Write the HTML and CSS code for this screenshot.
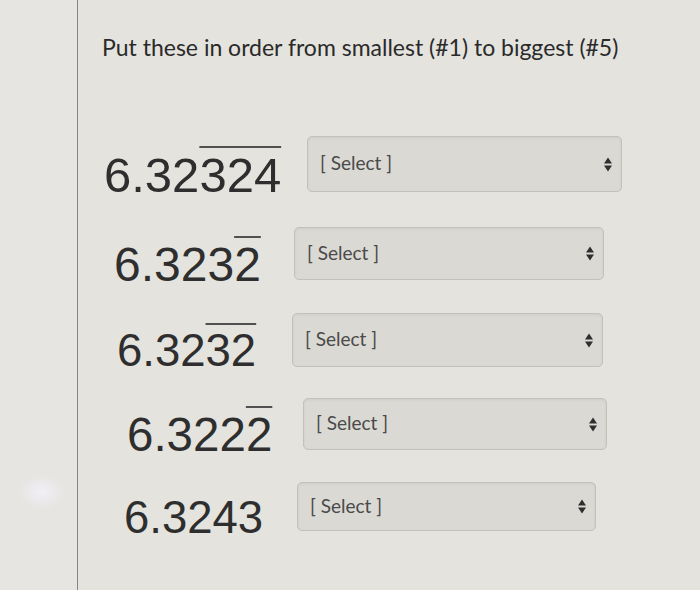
FILE: index.html
```html
<!DOCTYPE html>
<html lang="en">
<head>
<meta charset="utf-8">
<title>Ordering repeating decimals</title>
<link rel="stylesheet" href="styles.css">
</head>
<body>
<div class="page">
  <aside class="gutter"></aside>
  <main class="quiz">
    <p class="prompt">Put these in order from smallest (#1) to biggest (#5)</p>

    <div class="item r1">
      <span class="num">6.32<span class="rep">324</span></span>
      <div class="select"><span class="ph">[ Select ]</span>
        <svg class="arrows" viewBox="0 0 8 14"><polygon points="0,6 4,0 8,6"/><polygon points="0,8 4,14 8,8"/></svg>
      </div>
    </div>

    <div class="item r2">
      <span class="num">6.323<span class="rep">2</span></span>
      <div class="select"><span class="ph">[ Select ]</span>
        <svg class="arrows" viewBox="0 0 8 14"><polygon points="0,6 4,0 8,6"/><polygon points="0,8 4,14 8,8"/></svg>
      </div>
    </div>

    <div class="item r3">
      <span class="num">6.32<span class="rep">32</span></span>
      <div class="select"><span class="ph">[ Select ]</span>
        <svg class="arrows" viewBox="0 0 8 14"><polygon points="0,6 4,0 8,6"/><polygon points="0,8 4,14 8,8"/></svg>
      </div>
    </div>

    <div class="item r4">
      <span class="num">6.322<span class="rep">2</span></span>
      <div class="select"><span class="ph">[ Select ]</span>
        <svg class="arrows" viewBox="0 0 8 14"><polygon points="0,6 4,0 8,6"/><polygon points="0,8 4,14 8,8"/></svg>
      </div>
    </div>

    <div class="item r5">
      <span class="num">6.3243</span>
      <div class="select"><span class="ph">[ Select ]</span>
        <svg class="arrows" viewBox="0 0 8 14"><polygon points="0,6 4,0 8,6"/><polygon points="0,8 4,14 8,8"/></svg>
      </div>
    </div>
  </main>
</div>
</body>
</html>
```

FILE: styles.css
```css
html, body {
  margin: 0;
  padding: 0;
}

body {
  background: #e4e3de;
  color: #2c2c2c;
}

.page {
  display: flex;
  width: 700px;
  height: 590px;
  overflow: hidden;
}

/* left margin strip of the page, with a little glare */
.gutter {
  flex: none;
  width: 77px;
  border-right: 1px solid #858582;
  background:
    radial-gradient(ellipse 24px 18px at 42px 492px, rgba(246, 242, 255, 0.7), rgba(246, 242, 255, 0) 100%),
    #e6e5e1;
}

.quiz {
  flex: 1;
  display: flex;
  flex-direction: column;
}

.prompt {
  margin: 32px 0 0 24px;
  font-family: Lato, "Open Sans", sans-serif;
  font-size: 23px;
  line-height: 30px;
  color: #2a2a2a;
}

/* one question row: number on the left, dropdown on the right */
.item {
  display: flex;
  align-items: center;
  height: var(--boxh);
  margin-top: var(--gap);
  padding-left: var(--indent);
}

.r1 { --gap: 74px; --indent: 26px; --numw: 203px; --boxw: 315px; --boxh: 56px; --fs: 49px; }
.r2 { --gap: 35px; --indent: 36px; --numw: 180px; --boxw: 310px; --boxh: 53px; --fs: 48px; }
.r3 { --gap: 33px; --indent: 39px; --numw: 175px; --boxw: 311px; --boxh: 54px; --fs: 45.5px; }
.r4 { --gap: 31px; --indent: 49px; --numw: 176px; --boxw: 304px; --boxh: 52px; --fs: 47.5px; }
.r5 { --gap: 32px; --indent: 46px; --numw: 173px; --boxw: 299px; --boxh: 49px; --fs: 45.5px; }

.num {
  flex: none;
  width: var(--numw);
  padding-top: 22px;
  font-family: "Liberation Sans", Arial, sans-serif;
  font-size: var(--fs);
  line-height: 48px;
  color: #2e2e2e;
  white-space: nowrap;
}

/* repeating digits carry a bar */
.rep {
  text-decoration: overline;
  text-decoration-thickness: 2px;
  text-decoration-color: #505050;
}

.select {
  flex: none;
  box-sizing: border-box;
  width: var(--boxw);
  height: var(--boxh);
  display: flex;
  align-items: center;
  justify-content: space-between;
  padding: 0 9px 0 12px;
  background: #dad9d4;
  border: 1px solid #c2c1bc;
  border-radius: 5px;
  box-shadow: inset 0 1px 3px rgba(0, 0, 0, 0.06);
}

.ph {
  font-family: Lato, "Open Sans", sans-serif;
  font-size: 19px;
  color: #4a4a4a;
  margin-top: -3px;
}

.arrows {
  width: 8px;
  height: 15px;
  fill: #2f2f2f;
}
```
